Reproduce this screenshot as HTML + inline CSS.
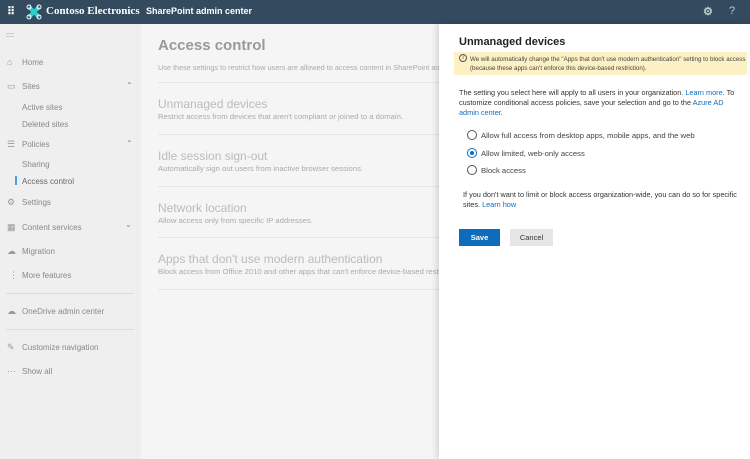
<!DOCTYPE html>
<html><head><style>
*{margin:0;padding:0;box-sizing:border-box}
body{width:750px;height:459px;overflow:hidden;font-family:"Liberation Sans",sans-serif;background:#f4f4f4;position:relative}
.hdr{position:absolute;left:0;top:0;width:750px;height:24px;background:#344a5e;color:#fff}
.hdr .t{position:absolute;top:6px;font-size:10px;font-weight:bold}
.nav{position:absolute;left:0;top:24px;width:141px;height:435px;background:#efefef;color:#888;font-size:8px}
.nav div{position:absolute;white-space:nowrap}
.ic{left:7px;color:#999;font-size:9px}
.main{position:absolute;left:141px;top:24px;width:300px;height:435px;background:#f5f5f5;color:#aaa}
.main div{position:absolute;white-space:nowrap}
.hr{height:1px;background:#e6e6e6;width:300px;left:17px}
.panel{position:absolute;left:439px;top:24px;width:311px;height:435px;background:#fff;box-shadow:-2px 0 6px rgba(0,0,0,.15);color:#333}
.panel div{position:absolute}
a{color:#0f6cbd;text-decoration:none}
.r{left:28px;width:10px;height:10px;border:1px solid #555;border-radius:50%}
.rl{left:42px;font-size:7.7px;color:#444;white-space:nowrap}
</style></head><body>
<div class="hdr">
<div class="t" style="left:7px;top:5px;font-size:11px;letter-spacing:1px">⠿</div>
<svg style="position:absolute;left:26px;top:4px" width="16" height="16" viewBox="0 0 16 16"><path d="M3 3L13 13M13 3L3 13" stroke="#3cc" stroke-width="4"/><circle cx="3" cy="3" r="2" fill="none" stroke="#fff"/><circle cx="13" cy="3" r="2" fill="none" stroke="#fff"/><circle cx="3" cy="13" r="2" fill="none" stroke="#fff"/><circle cx="13" cy="13" r="2" fill="none" stroke="#fff"/></svg>
<div class="t" style="left:46px;top:5px;font-family:'Liberation Serif',serif;font-size:11px">Contoso Electronics</div>
<div class="t" style="left:146px;font-size:9px">SharePoint admin center</div>
<div class="t" style="left:703px;top:5px;font-size:11px;color:#bcc">⚙</div>
<div class="t" style="left:729px;top:5px;font-size:11px;font-weight:normal;color:#bcc">?</div>
</div>
<div class="nav">
<div style="left:6px;top:9px;width:8px;height:4px;border-top:1px solid #ccc;border-bottom:1px solid #ccc"></div>
<div class="ic" style="top:33px">⌂</div><div style="left:22px;top:34px">Home</div>
<div class="ic" style="top:57px">▭</div><div style="left:22px;top:58px">Sites</div><div style="left:126px;top:57px">⌃</div>
<div style="left:22px;top:79px">Active sites</div>
<div style="left:22px;top:96px">Deleted sites</div>
<div class="ic" style="top:115px">☰</div><div style="left:22px;top:116px">Policies</div><div style="left:126px;top:115px">⌃</div>
<div style="left:22px;top:136px">Sharing</div>
<div style="left:15px;top:152px;width:2px;height:9px;background:#4a9de0"></div>
<div style="left:22px;top:153px;color:#666">Access control</div>
<div class="ic" style="top:173px">⚙</div><div style="left:22px;top:174px">Settings</div>
<div class="ic" style="top:198px">▦</div><div style="left:22px;top:199px">Content services</div><div style="left:125px;top:196px">⌄</div>
<div class="ic" style="top:222px">☁</div><div style="left:22px;top:223px">Migration</div>
<div class="ic" style="top:246px;left:9px">⋮</div><div style="left:22px;top:247px">More features</div>
<div style="left:6px;top:269px;width:128px;height:1px;background:#ddd"></div>
<div class="ic" style="top:282px">☁</div><div style="left:22px;top:283px">OneDrive admin center</div>
<div style="left:6px;top:305px;width:128px;height:1px;background:#ddd"></div>
<div class="ic" style="top:318px">✎</div><div style="left:22px;top:319px">Customize navigation</div>
<div class="ic" style="top:342px">···</div><div style="left:22px;top:343px">Show all</div>
</div>
<div class="main">
<div style="left:17px;top:13px;font-size:15px;font-weight:bold;color:#999">Access control</div>
<div style="left:17px;top:39px;font-size:7.3px">Use these settings to restrict how users are allowed to access content in SharePoint and O</div>
<div class="hr" style="top:58px"></div>
<div style="left:17px;top:73px;font-size:12px;color:#bbb">Unmanaged devices</div>
<div style="left:17px;top:88px;font-size:7.7px">Restrict access from devices that aren't compliant or joined to a domain.</div>
<div class="hr" style="top:110px"></div>
<div style="left:17px;top:125px;font-size:12px;color:#bbb">Idle session sign-out</div>
<div style="left:17px;top:140px;font-size:7.7px">Automatically sign out users from inactive browser sessions.</div>
<div class="hr" style="top:162px"></div>
<div style="left:17px;top:177px;font-size:12px;color:#bbb">Network location</div>
<div style="left:17px;top:192px;font-size:7.7px">Allow access only from specific IP addresses.</div>
<div class="hr" style="top:213px"></div>
<div style="left:17px;top:228px;font-size:12px;color:#bbb">Apps that don't use modern authentication</div>
<div style="left:17px;top:243px;font-size:7.7px">Block access from Office 2010 and other apps that can't enforce device-based restric</div>
<div class="hr" style="top:265px"></div>
</div>
<div class="panel">
<div style="left:20px;top:12px;font-size:11px;font-weight:bold;color:#222">Unmanaged devices</div>
<div style="left:15px;top:28px;width:293px;height:23px;background:#fcf0c4;font-size:6.2px;color:#444;padding:3px 0 0 16px;line-height:9px">
<span style="position:absolute;left:5px;top:2px;width:8px;height:8px;border:1px solid #555;border-radius:50%;text-align:center;line-height:7px;font-size:6px">i</span>We will automatically change the "Apps that don't use modern authentication" setting to block access (because these apps can't enforce this device-based restriction).</div>
<div style="left:20px;top:64px;width:285px;font-size:7.3px;line-height:10px;color:#333">The setting you select here will apply to all users in your organization. <a>Learn more</a>. To customize conditional access policies, save your selection and go to the <a>Azure AD admin center</a>.</div>
<div class="r" style="top:106px"></div><div class="rl" style="top:107px">Allow full access from desktop apps, mobile apps, and the web</div>
<div class="r" style="top:124px;border-color:#0f6cbd"><div style="left:2px;top:2px;width:4px;height:4px;border-radius:50%;background:#0f6cbd"></div></div><div class="rl" style="top:125px">Allow limited, web-only access</div>
<div class="r" style="top:141px"></div><div class="rl" style="top:142px">Block access</div>
<div style="left:24px;top:166px;width:285px;font-size:7.3px;line-height:10px;color:#333">If you don't want to limit or block access organization-wide, you can do so for specific sites. <a>Learn how</a></div>
<div style="left:20px;top:205px;width:41px;height:17px;background:#0f6cbd;color:#fff;font-size:7.5px;font-weight:bold;text-align:center;line-height:17px">Save</div>
<div style="left:71px;top:205px;width:43px;height:17px;background:#e6e6e6;color:#333;font-size:7.5px;text-align:center;line-height:17px">Cancel</div>
</div>
</body></html>
